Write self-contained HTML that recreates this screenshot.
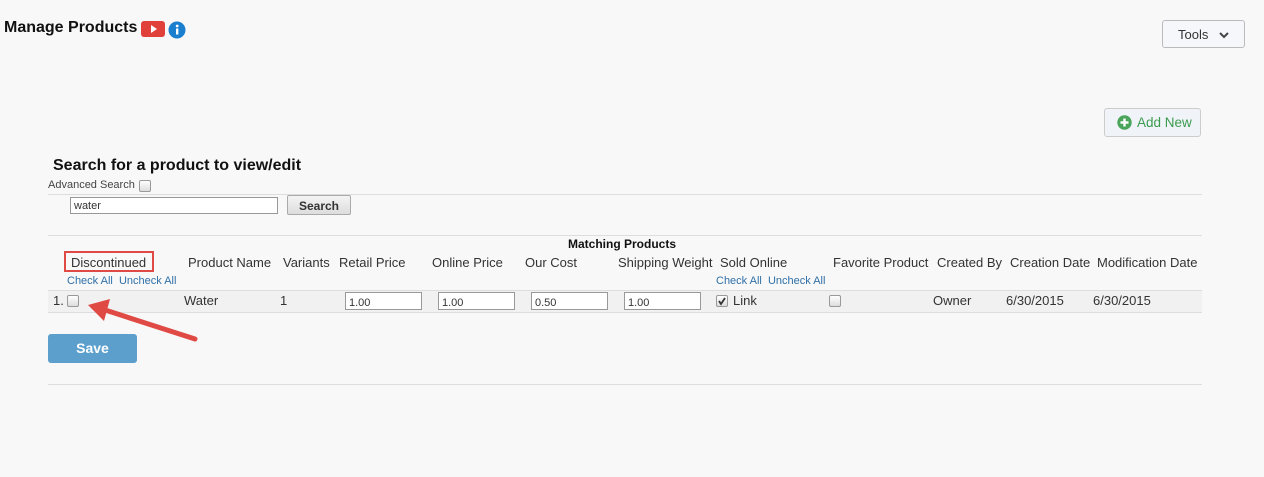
<!DOCTYPE html>
<html><head><style>
body{margin:0;width:1264px;height:477px;background:#f8f8f8;font-family:"Liberation Sans",Arial,sans-serif;color:#222;position:relative;overflow:hidden}
.a{position:absolute;white-space:nowrap}
.h{font-size:13px;top:255px;color:#333}
.c{font-size:11px;color:#2f6fa7}
.in{position:absolute;top:292px;height:18px;width:77px;border:1px solid #999;background:#fff;font-size:11px;box-sizing:border-box;padding:4px 0 0 3px;color:#333}
.cb{position:absolute;width:12px;height:12px;border:1px solid #999;border-radius:2px;background:linear-gradient(#fff,#ddd);box-sizing:border-box}
.d{font-size:13px;top:293px;color:#333}
</style></head><body>
<div class="a" style="left:4px;top:19px;font-size:16px;font-weight:bold;color:#111">Manage Products</div>
<div class="a" style="left:141px;top:21px;width:24px;height:16px;background:#e0413b;border-radius:3px"></div>
<svg class="a" style="left:141px;top:21px" width="24" height="16"><path d="M10 4 L16 8 L10 12Z" fill="#fff"/></svg>
<svg class="a" style="left:168px;top:21px" width="18" height="18"><circle cx="9" cy="9" r="8.5" fill="#1b7fcf"/><rect x="8" y="7.5" width="2.4" height="6" fill="#fff"/><circle cx="9.2" cy="5" r="1.4" fill="#fff"/></svg>
<div class="a" style="left:1162px;top:20px;width:83px;height:28px;border:1px solid #bbb;border-radius:3px;background:#f5f7fa;box-sizing:border-box;font-size:13px;color:#333;padding:6px 0 0 15px">Tools <svg width="12" height="8" style="margin-left:6px"><path d="M2 2 L6 6 L10 2" stroke="#444" stroke-width="2" fill="none"/></svg></div>
<div class="a" style="left:1104px;top:108px;width:97px;height:29px;border:1px solid #ccc;border-radius:3px;background:#f0f4f8;box-sizing:border-box;font-size:13.5px;color:#3c9a4e;padding:6px 0 0 32px">Add New</div>
<svg class="a" style="left:1117px;top:115px" width="15" height="15"><circle cx="7.5" cy="7.5" r="7.2" fill="#4aa45a"/><path d="M7.5 3.5v8M3.5 7.5h8" stroke="#fff" stroke-width="2.4"/></svg>
<div class="a" style="left:53px;top:157px;font-size:16px;font-weight:bold;color:#111">Search for a product to view/edit</div>
<div class="a" style="left:48px;top:179px;font-size:11px;color:#444">Advanced Search</div>
<div class="cb" style="left:139px;top:180px"></div>
<div class="a" style="left:48px;top:194px;width:1154px;height:1px;background:#ddd"></div>
<div class="a" style="left:70px;top:197px;width:208px;height:17px;border:1px solid #999;background:#fff;box-sizing:border-box;font-size:11px;padding:2px 0 0 3px;color:#333">water</div>
<div class="a" style="left:287px;top:195px;width:64px;height:20px;border:1px solid #aaa;border-radius:2px;background:linear-gradient(#f4f4f4,#ddd);box-sizing:border-box;font-size:12px;font-weight:bold;color:#333;text-align:center;padding-top:3px">Search</div>
<div class="a" style="left:48px;top:235px;width:1154px;height:1px;background:#ddd"></div>
<div class="a" style="left:568px;top:237px;font-size:12px;font-weight:bold;color:#111">Matching Products</div>
<div class="a" style="left:64px;top:251px;width:90px;height:21px;border:2px solid #e04a44;box-sizing:border-box"></div>
<div class="a h" style="left:71px">Discontinued</div>
<div class="a h" style="left:188px">Product Name</div>
<div class="a h" style="left:283px">Variants</div>
<div class="a h" style="left:339px">Retail Price</div>
<div class="a h" style="left:432px">Online Price</div>
<div class="a h" style="left:525px">Our Cost</div>
<div class="a h" style="left:618px">Shipping Weight</div>
<div class="a h" style="left:720px">Sold Online</div>
<div class="a h" style="left:833px">Favorite Product</div>
<div class="a h" style="left:937px">Created By</div>
<div class="a h" style="left:1010px">Creation Date</div>
<div class="a h" style="left:1097px">Modification Date</div>
<div class="a c" style="left:67px;top:275px">Check All &nbsp;Uncheck All</div>
<div class="a c" style="left:716px;top:275px">Check All &nbsp;Uncheck All</div>
<div class="a" style="left:48px;top:290px;width:1154px;height:23px;background:#f1f1f1;border-top:1px solid #ddd;border-bottom:1px solid #ddd;box-sizing:border-box"></div>
<div class="a d" style="left:53px">1.</div>
<div class="cb" style="left:67px;top:295px"></div>
<div class="a d" style="left:184px">Water</div>
<div class="a d" style="left:280px">1</div>
<div class="in" style="left:345px">1.00</div>
<div class="in" style="left:438px">1.00</div>
<div class="in" style="left:531px">0.50</div>
<div class="in" style="left:624px">1.00</div>
<div class="cb" style="left:716px;top:295px"></div>
<svg class="a" style="left:716px;top:295px" width="12" height="12"><path d="M3 6 L5 9 L9 3" stroke="#333" stroke-width="1.8" fill="none"/></svg>
<div class="a d" style="left:733px">Link</div>
<div class="cb" style="left:829px;top:295px"></div>
<div class="a d" style="left:933px">Owner</div>
<div class="a d" style="left:1006px">6/30/2015</div>
<div class="a d" style="left:1093px">6/30/2015</div>
<svg class="a" style="left:80px;top:295px" width="130" height="55"><path d="M115 44 L22 14" stroke="#e04a44" stroke-width="5" stroke-linecap="round"/><path d="M8 10 L30 4 L24 26Z" fill="#e04a44"/></svg>
<div class="a" style="left:48px;top:334px;width:89px;height:29px;background:#5c9fcc;border-radius:3px;color:#fff;font-size:14px;font-weight:bold;text-align:center;line-height:29px">Save</div>
<div class="a" style="left:48px;top:384px;width:1154px;height:1px;background:#ddd"></div>
</body></html>
